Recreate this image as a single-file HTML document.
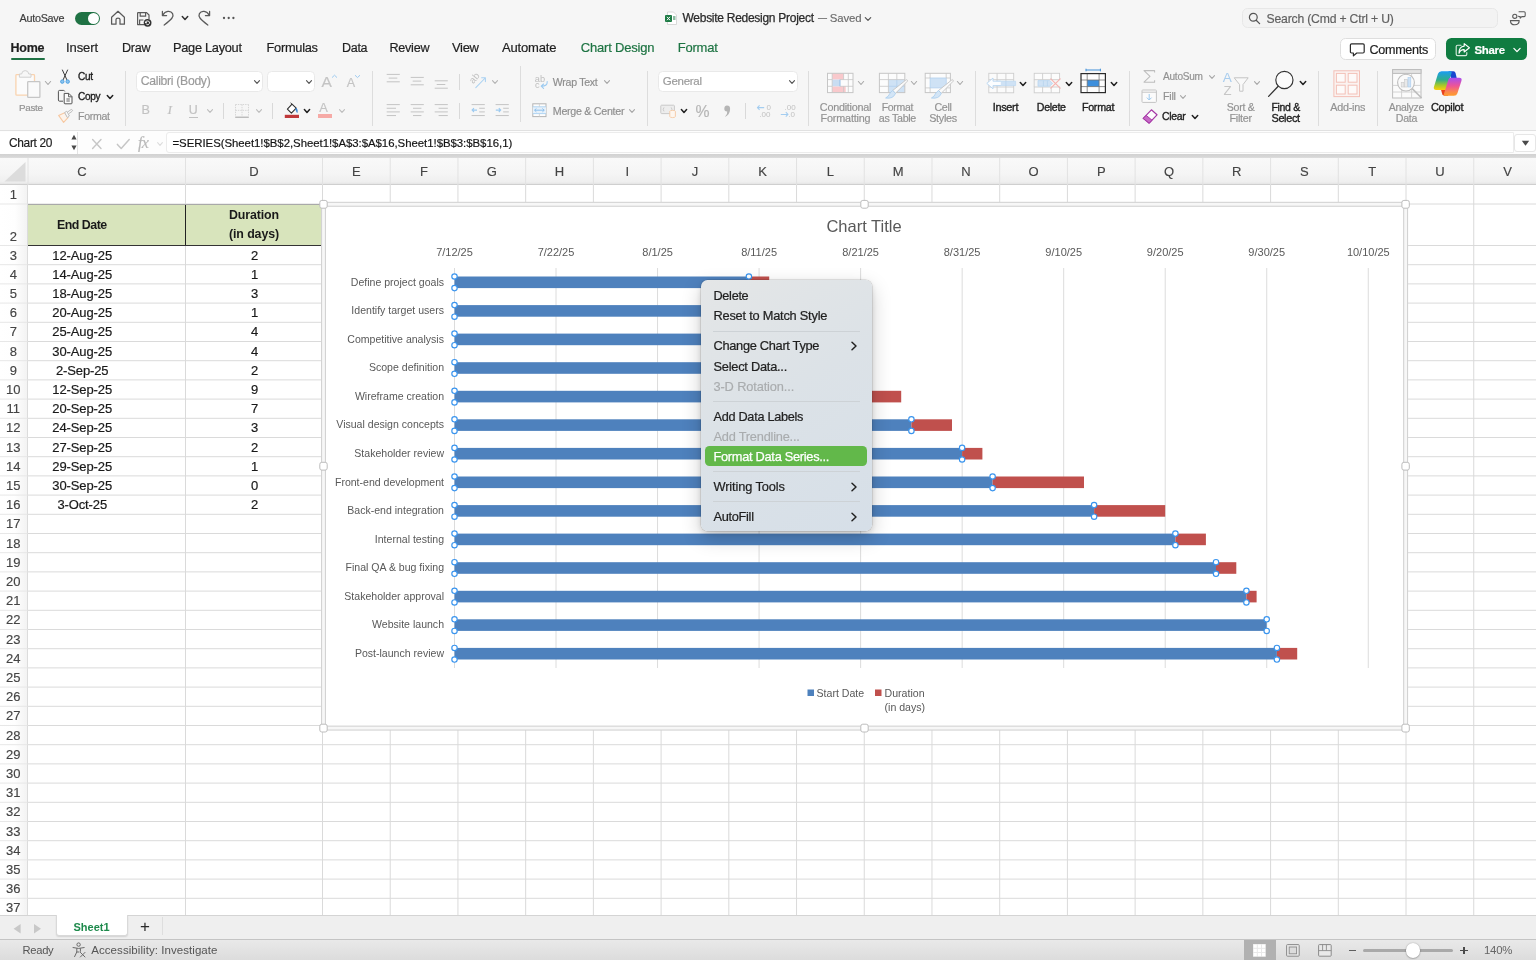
<!DOCTYPE html>
<html lang="en"><head><meta charset="utf-8"><title>Website Redesign Project</title>
<style>
*{box-sizing:border-box}
html,body{margin:0;padding:0}
body{width:1536px;height:960px;overflow:hidden;position:relative;background:#f6f6f6;font-family:"Liberation Sans",sans-serif;color:#262626;-webkit-font-smoothing:antialiased}
.abs{position:absolute}
#toolbar .abs{-webkit-text-stroke-width:0.18px}
/* ---------- sheet ---------- */
#toolbar,#sheet,#menu,#tabs,#status{will-change:transform}
#sheet{position:absolute;left:0;top:0;width:1536px;height:915px;overflow:hidden}
#sheet:before{content:"";position:absolute;left:0;top:158px;width:1536px;height:757px;background:#fff}
#grid{position:absolute;left:0;top:158px}
#colhead{position:absolute;left:0;top:158px;width:1536px;height:27px;background:linear-gradient(#f9f9f9 0%,#f5f5f5 60%,#efefef 92%,#e4e4e4 100%);border-bottom:1px solid #cfcfcf}
#chsep{position:absolute;left:0;top:158px}
#corner{position:absolute;left:0;top:158px;width:28px;height:27px}
.ch{position:absolute;top:158px;height:26px;line-height:27px;text-align:center;font-size:13px;color:#444;-webkit-text-stroke:0.15px #444}
#rowhead{position:absolute;left:0;top:185px;width:28px;height:730px;background:linear-gradient(to right,#ffffff 0%,#fefefe 55%,#f3f3f3 100%);border-right:1px solid #dcdcdc}
.rh{position:absolute;left:0;width:28px;text-align:center;font-size:13px;color:#444;padding-right:1.5px;-webkit-text-stroke:0.15px #444}
.hc{position:absolute;background:#d8e4bc;text-align:center;font-weight:bold;font-size:12.4px;color:#1a1a1a;letter-spacing:-0.1px}
.cell{position:absolute;height:19.2px;line-height:20.4px;text-align:center;font-size:13px;color:#1a1a1a;letter-spacing:-0.12px;-webkit-text-stroke:0.2px #1a1a1a}
#chart{position:absolute;left:315px;top:197px}
/* ---------- context menu ---------- */
#menu{position:absolute;left:701px;top:280px;width:171px;height:251px;border-radius:6.5px;background:linear-gradient(150deg,#e4e6e7 0%,#dce2e7 45%,#d6dfe8 100%);box-shadow:0 0 0 0.5px rgba(0,0,0,.18),0 7px 20px rgba(0,0,0,.2),0 2px 6px rgba(0,0,0,.12);font-size:13px;color:#1f1f1f}
#menu .mi{position:absolute;left:12.5px;height:20px;line-height:20px;white-space:nowrap;-webkit-text-stroke:0.22px #1f1f1f}
#menu .dis{color:#a9acae;-webkit-text-stroke:0.15px #a9acae}
#menu .sep{position:absolute;left:12px;width:147px;height:1px;background:#cdd2d6}
#menu .hl{position:absolute;left:4.2px;top:166.2px;width:161.6px;height:19.6px;border-radius:4.5px;background:#62b84a}
#menu .chev{position:absolute;left:149px;width:8px;height:10px}
/* ---------- bottom ---------- */
#tabs{position:absolute;left:0;top:915px;width:1536px;height:24px;background:#efefef;border-top:1px solid #d4d4d4}
#status{position:absolute;left:0;top:939px;width:1536px;height:21px;background:linear-gradient(#e9e9e9,#dcdcdc);border-top:1px solid #c4c4c4;font-size:11.5px;color:#505050}

</style></head>
<body>
<div id="toolbar">
<div class="abs" style="top:9.90px;height:16px;line-height:16px;font-size:10.8px;color:#3d3d3d;white-space:nowrap;letter-spacing:-0.262px;left:19.50px;">AutoSave</div>
<div class="abs" style="left:74.5px;top:12px;width:25.5px;height:12.8px;border-radius:7px;background:#1f7244"></div>
<div class="abs" style="left:88.2px;top:13.2px;width:10.4px;height:10.4px;border-radius:6px;background:#fff"></div>
<svg class="abs" style="left:110.00px;top:10.00px" width="16" height="16" viewBox="0 0 16 16"><path d="M1.6 7.2 L8 1.3 L14.4 7.2 V14.2 H10 V9.6 Q10 8 8 8 Q6 8 6 9.6 V14.2 H1.6 Z" fill="none" stroke="#5a5a5a" stroke-width="1.25" stroke-linejoin="round"/></svg>
<svg class="abs" style="left:135.50px;top:10.50px" width="17" height="17" viewBox="0 0 17 17"><path d="M1.6 1.6 H10.6 L13 4 V8 M8 13.6 H1.6 Z M1.6 13.6 V1.6" fill="none" stroke="#5a5a5a" stroke-width="1.2" stroke-linejoin="round"/><path d="M4.2 1.8 V5.2 H9.6 V1.8" fill="none" stroke="#5a5a5a" stroke-width="1.2"/><path d="M3.6 13.4 V9 H7.4" fill="none" stroke="#5a5a5a" stroke-width="1.2"/><circle cx="11.6" cy="11.8" r="3.9" fill="#333"/><path d="M9.7 11.9 a1.9 1.9 0 1 1 .7 1.4 M9.4 10.6 l.3 1.4 l1.3 -.4" fill="none" stroke="#fff" stroke-width=".9"/></svg>
<svg class="abs" style="left:160.00px;top:9.00px" width="16" height="18" viewBox="0 0 16 18"><path d="M2.4 2.4 V6.6 H6.6 M2.8 6.2 C5.2 1.8 10.6 1.2 12.6 4.6 C14.2 7.6 11.8 10.2 4.2 16" fill="none" stroke="#5a5a5a" stroke-width="1.25" stroke-linecap="round" stroke-linejoin="round"/></svg>
<svg class="abs" style="left:178.60px;top:12.20px" width="12" height="12" viewBox="-6 -6 12 12"><path d="M-2.7 -1.5 L0 1.5 L2.7 -1.5" fill="none" stroke="#333" stroke-width="1.5" stroke-linecap="round" stroke-linejoin="round"/></svg>
<svg class="abs" style="left:195.50px;top:9.00px" width="16" height="18" viewBox="0 0 16 18"><path d="M13.6 2.4 V6.6 H9.4 M13.2 6.2 C10.8 1.8 5.4 1.2 3.4 4.6 C1.8 7.6 4.2 10.2 11.8 16" fill="none" stroke="#5a5a5a" stroke-width="1.25" stroke-linecap="round" stroke-linejoin="round"/></svg>
<svg class="abs" style="left:221.00px;top:15.00px" width="16" height="6" viewBox="0 0 16 6"><circle cx="3" cy="3" r="1.15" fill="#555"/><circle cx="7.7" cy="3" r="1.15" fill="#555"/><circle cx="12.4" cy="3" r="1.15" fill="#555"/></svg>
<svg class="abs" style="left:663.50px;top:11.00px" width="14" height="15" viewBox="0 0 14 15"><path d="M3.5 1 H9.5 L12.5 4 V13.5 H3.5 Z" fill="#fff" stroke="#d0d0d0" stroke-width=".8"/><rect x="1" y="4" width="7" height="7" rx="1" fill="#1d7b45"/><path d="M3 5.8 L6 9.2 M6 5.8 L3 9.2" stroke="#fff" stroke-width="1"/><path d="M9 6 h2.5 M9 8 h2.5" stroke="#1d7b45" stroke-width="1"/></svg>
<div class="abs" style="top:10.30px;height:16px;line-height:16px;font-size:12px;color:#2a2a2a;white-space:nowrap;letter-spacing:-0.276px;left:682.50px;-webkit-text-stroke:0.25px #2a2a2a;">Website Redesign Project</div>
<div class="abs" style="top:10.30px;height:16px;line-height:16px;font-size:11.4px;color:#6a6a6a;white-space:nowrap;letter-spacing:-0.1px;left:818.00px;-webkit-text-stroke:0.15px #6a6a6a;"><span style="display:inline-block;width:11.8px;font-size:9px;vertical-align:top">—</span>Saved</div>
<svg class="abs" style="left:861.50px;top:12.50px" width="12" height="12" viewBox="-6 -6 12 12"><path d="M-2.7 -1.4 L0 1.4 L2.7 -1.4" fill="none" stroke="#555" stroke-width="1.2" stroke-linecap="round" stroke-linejoin="round"/></svg>
<div class="abs" style="left:1242px;top:8.3px;width:255.6px;height:20.2px;border-radius:5.5px;background:#f3f3f3;border:1px solid #e7e7e7"></div>
<svg class="abs" style="left:1247.50px;top:12.00px" width="13" height="13" viewBox="0 0 13 13"><circle cx="5.3" cy="5.3" r="3.9" fill="none" stroke="#555" stroke-width="1.2"/><path d="M8.2 8.2 L11.6 11.6" stroke="#555" stroke-width="1.3" stroke-linecap="round"/></svg>
<div class="abs" style="top:10.80px;height:16px;line-height:16px;font-size:12.2px;color:#616161;white-space:nowrap;letter-spacing:-0.183px;left:1266.50px;">Search (Cmd + Ctrl + U)</div>
<svg class="abs" style="left:1509.00px;top:9.50px" width="18" height="17" viewBox="0 0 18 17"><circle cx="5.8" cy="6.3" r="2.1" fill="none" stroke="#5a5a5a" stroke-width="1.1"/><path d="M1.4 10.6 H10.2 Q10.2 14.8 5.8 14.8 Q1.4 14.8 1.4 10.6 Z" fill="none" stroke="#5a5a5a" stroke-width="1.1" stroke-linejoin="round"/><path d="M9.6 1.8 H15.2 Q16.2 1.8 16.2 2.8 V5.6 Q16.2 6.6 15.2 6.6 H12.8 L11.2 8.2 V6.6 H10.6 Q9.6 6.6 9.4 5.8" fill="none" stroke="#5a5a5a" stroke-width="1.05" stroke-linejoin="round"/></svg>
<div class="abs" style="top:40.40px;height:16px;line-height:16px;font-size:12.5px;color:#1f1f1f;white-space:nowrap;font-weight:bold;letter-spacing:-0.243px;left:10.50px;">Home</div>
<div class="abs" style="top:40.40px;height:16px;line-height:16px;font-size:13px;color:#1f1f1f;white-space:nowrap;letter-spacing:-0.103px;left:66.00px;-webkit-text-stroke:0.2px #1f1f1f;">Insert</div>
<div class="abs" style="top:40.40px;height:16px;line-height:16px;font-size:12.6px;color:#1f1f1f;white-space:nowrap;letter-spacing:-0.301px;left:122.00px;-webkit-text-stroke:0.2px #1f1f1f;">Draw</div>
<div class="abs" style="top:40.40px;height:16px;line-height:16px;font-size:12.8px;color:#1f1f1f;white-space:nowrap;letter-spacing:-0.288px;left:173.00px;-webkit-text-stroke:0.2px #1f1f1f;">Page Layout</div>
<div class="abs" style="top:40.40px;height:16px;line-height:16px;font-size:12.8px;color:#1f1f1f;white-space:nowrap;letter-spacing:-0.264px;left:266.50px;-webkit-text-stroke:0.2px #1f1f1f;">Formulas</div>
<div class="abs" style="top:40.40px;height:16px;line-height:16px;font-size:12.5px;color:#1f1f1f;white-space:nowrap;letter-spacing:-0.301px;left:342.00px;-webkit-text-stroke:0.2px #1f1f1f;">Data</div>
<div class="abs" style="top:40.40px;height:16px;line-height:16px;font-size:12.6px;color:#1f1f1f;white-space:nowrap;letter-spacing:-0.263px;left:389.50px;-webkit-text-stroke:0.2px #1f1f1f;">Review</div>
<div class="abs" style="top:40.40px;height:16px;line-height:16px;font-size:13px;color:#1f1f1f;white-space:nowrap;letter-spacing:-0.315px;left:452.00px;-webkit-text-stroke:0.2px #1f1f1f;">View</div>
<div class="abs" style="top:40.40px;height:16px;line-height:16px;font-size:13px;color:#1f1f1f;white-space:nowrap;letter-spacing:-0.164px;left:502.00px;-webkit-text-stroke:0.2px #1f1f1f;">Automate</div>
<div class="abs" style="top:40.40px;height:16px;line-height:16px;font-size:13px;color:#1e7443;white-space:nowrap;letter-spacing:-0.193px;left:580.75px;-webkit-text-stroke:0.2px #1e7443;">Chart Design</div>
<div class="abs" style="top:40.40px;height:16px;line-height:16px;font-size:13px;color:#1e7443;white-space:nowrap;letter-spacing:-0.234px;left:677.75px;-webkit-text-stroke:0.2px #1e7443;">Format</div>
<div class="abs" style="left:10.5px;top:58.2px;width:34px;height:2px;border-radius:1px;background:#1f7244"></div>
<div class="abs" style="left:1340.3px;top:38.2px;width:95.6px;height:22px;border-radius:5.5px;background:#fff;border:1px solid #dedede"></div>
<svg class="abs" style="left:1348.50px;top:42.00px" width="17" height="16" viewBox="0 0 17 16"><path d="M2.6 1.8 H14 Q15.2 1.8 15.2 3 V9.8 Q15.2 11 14 11 H7.8 L4.4 13.8 V11 H2.6 Q1.4 11 1.4 9.8 V3 Q1.4 1.8 2.6 1.8 Z" fill="none" stroke="#2b2b2b" stroke-width="1.2" stroke-linejoin="round"/></svg>
<div class="abs" style="top:41.60px;height:16px;line-height:16px;font-size:12.6px;color:#1f1f1f;white-space:nowrap;letter-spacing:-0.309px;left:1369.50px;-webkit-text-stroke:0.2px #1f1f1f;">Comments</div>
<div class="abs" style="left:1445.8px;top:38.4px;width:80.8px;height:22px;border-radius:5.5px;background:#107c41"></div>
<svg class="abs" style="left:1454.00px;top:41.50px" width="17" height="16" viewBox="0 0 17 16"><path d="M7 3.2 H3.6 Q2.2 3.2 2.2 4.6 V12.2 Q2.2 13.6 3.6 13.6 H11.4 Q12.8 13.6 12.8 12.2 V10.6" fill="none" stroke="#d6eadd" stroke-width="1.15" stroke-linecap="round"/><path d="M10.2 1.6 L15.4 5.8 L10.2 10 V7.6 Q6.6 7.4 5 11.2 Q5 4.6 10.2 4.1 Z" fill="none" stroke="#fff" stroke-width="1.15" stroke-linejoin="round"/></svg>
<div class="abs" style="top:41.60px;height:16px;line-height:16px;font-size:11.4px;color:#fff;white-space:nowrap;font-weight:bold;letter-spacing:-0.296px;left:1474.50px;">Share</div>
<svg class="abs" style="left:1511.00px;top:43.80px" width="12" height="12" viewBox="-6 -6 12 12"><path d="M-3.1 -1.6 L0 1.6 L3.1 -1.6" fill="none" stroke="#fff" stroke-width="1.3" stroke-linecap="round" stroke-linejoin="round"/></svg>
<svg class="abs" style="left:14.00px;top:69.00px" width="28" height="31" viewBox="0 0 28 31"><rect x="1.9" y="5.6" width="18.6" height="20.6" rx="0.8" fill="#fbfbfb" stroke="#f9d3b0" stroke-width="1.3"/><path d="M5.4 8.2 V5 H7.6 Q8 1.6 11.2 1.6 Q14.4 1.6 14.8 5 H17 V8.2 Z" fill="#f7f7f7" stroke="#d0d0d0" stroke-width="1"/><rect x="13.7" y="12.6" width="12.2" height="15.8" rx="0.6" fill="#fafafa" stroke="#c6c6c6" stroke-width="1.3"/></svg>
<svg class="abs" style="left:41.50px;top:77.20px" width="12" height="12" viewBox="-6 -6 12 12"><path d="M-2.6 -1.5 L0 1.5 L2.6 -1.5" fill="none" stroke="#a8a8a8" stroke-width="1.1" stroke-linecap="round" stroke-linejoin="round"/></svg>
<div class="abs" style="top:100.00px;height:16px;line-height:16px;font-size:9.8px;color:#929292;white-space:nowrap;letter-spacing:-0.265px;left:-69.13px;width:200px;text-align:center;">Paste</div>
<svg class="abs" style="left:58.50px;top:68.60px" width="12" height="16" viewBox="0 0 12 16"><path d="M3.4 1 L7.8 10.6 M8.6 1 L4.2 10.6" stroke="#3a3a3a" stroke-width="1" stroke-linecap="round"/><circle cx="3.3" cy="12.6" r="1.7" fill="#8cc4f0" stroke="#4a9fe0" stroke-width="1"/><circle cx="8.7" cy="12.6" r="1.7" fill="#8cc4f0" stroke="#4a9fe0" stroke-width="1"/></svg>
<div class="abs" style="top:69.30px;height:16px;line-height:16px;font-size:10.0px;color:#1e1e1e;white-space:nowrap;letter-spacing:-0.281px;left:78.00px;-webkit-text-stroke:0.35px #1e1e1e;">Cut</div>
<svg class="abs" style="left:56.50px;top:88.50px" width="17" height="16" viewBox="0 0 17 16"><path d="M6 12.2 H2.6 Q1.4 12.2 1.4 11 V2.6 Q1.4 1.4 2.6 1.4 H6.4 Q7.4 1.4 7.8 2.4" fill="none" stroke="#4a4a4a" stroke-width=".95"/><path d="M7.2 4.4 H11.8 L15 7.6 V14 Q15 14.8 14.2 14.8 H8 Q7.2 14.8 7.2 14 Z" fill="#fbfbfb" stroke="#4a4a4a" stroke-width=".95" stroke-linejoin="round"/><path d="M11.6 4.6 V7.8 H14.8" fill="none" stroke="#4a4a4a" stroke-width=".9"/><path d="M9.4 10 H12.8 M9.4 12 H12.8" stroke="#3a3a3a" stroke-width=".8"/></svg>
<div class="abs" style="top:89.30px;height:16px;line-height:16px;font-size:10.0px;color:#1e1e1e;white-space:nowrap;letter-spacing:-0.282px;left:78.00px;-webkit-text-stroke:0.35px #1e1e1e;">Copy</div>
<svg class="abs" style="left:103.60px;top:91.00px" width="12" height="12" viewBox="-6 -6 12 12"><path d="M-2.7 -1.5 L0 1.5 L2.7 -1.5" fill="none" stroke="#222" stroke-width="1.5" stroke-linecap="round" stroke-linejoin="round"/></svg>
<svg class="abs" style="left:57.00px;top:108.00px" width="18" height="16" viewBox="0 0 18 16"><path d="M1.6 7.4 L8.2 4.4 L11 9.6 L6.6 14.4 Z" fill="#fdf3ea" stroke="#f7c9a3" stroke-width="1.1" stroke-linejoin="round"/><path d="M7.6 4.6 L9.8 3.2 L12.4 8 L10.4 9.6 Z M10.6 4 L14 1.6 Q15 1.2 15.4 2 Q15.8 2.8 15 3.4 L11.8 5.6" fill="#f8f8f8" stroke="#bdbdbd" stroke-width="1" stroke-linejoin="round"/></svg>
<div class="abs" style="top:108.20px;height:16px;line-height:16px;font-size:10.6px;color:#929292;white-space:nowrap;letter-spacing:-0.314px;left:78.00px;">Format</div>
<div class="abs" style="left:125.30px;top:71px;width:1px;height:55px;background:#dddddd"></div>
<div class="abs" style="left:135.6px;top:70.6px;width:127.8px;height:21.2px;border-radius:4.5px;background:#fff;border:1px solid #e9e9e9"></div>
<div class="abs" style="top:73.40px;height:16px;line-height:16px;font-size:12.2px;color:#9b9b9b;white-space:nowrap;letter-spacing:-0.3px;left:140.80px;">Calibri (Body)</div>
<svg class="abs" style="left:251.00px;top:76.00px" width="12" height="12" viewBox="-6 -6 12 12"><path d="M-2.5 -1.4 L0 1.4 L2.5 -1.4" fill="none" stroke="#555" stroke-width="1.15" stroke-linecap="round" stroke-linejoin="round"/></svg>
<div class="abs" style="left:266.6px;top:70.6px;width:48.6px;height:21.2px;border-radius:4.5px;background:#fff;border:1px solid #e9e9e9"></div>
<svg class="abs" style="left:302.60px;top:76.00px" width="12" height="12" viewBox="-6 -6 12 12"><path d="M-2.5 -1.4 L0 1.4 L2.5 -1.4" fill="none" stroke="#555" stroke-width="1.15" stroke-linecap="round" stroke-linejoin="round"/></svg>
<div class="abs" style="top:73.60px;height:16px;line-height:16px;font-size:15.5px;color:#c4c4c4;white-space:nowrap;left:321.50px;">A</div>
<svg class="abs" style="left:330.50px;top:73.50px" width="7" height="5" viewBox="0 0 7 5"><path d="M1 3.6 L3.5 1.2 L6 3.6" fill="none" stroke="#9ccaf0" stroke-width="1"/></svg>
<div class="abs" style="top:74.60px;height:16px;line-height:16px;font-size:12.6px;color:#c4c4c4;white-space:nowrap;left:346.80px;">A</div>
<svg class="abs" style="left:354.00px;top:73.50px" width="7" height="5" viewBox="0 0 7 5"><path d="M1 1.2 L3.5 3.6 L6 1.2" fill="none" stroke="#9ccaf0" stroke-width="1"/></svg>
<div class="abs" style="top:102.20px;height:16px;line-height:16px;font-size:12.6px;color:#c2c2c2;white-space:nowrap;left:141.60px;">B</div>
<div class="abs" style="top:102.20px;height:16px;line-height:16px;font-size:12.6px;color:#c2c2c2;white-space:nowrap;left:167.40px;font-style:italic;font-family:'Liberation Serif',serif;font-size:13.5px;">I</div>
<div class="abs" style="top:101.80px;height:16px;line-height:16px;font-size:12.4px;color:#c2c2c2;white-space:nowrap;left:188.80px;">U</div>
<div class="abs" style="left:189px;top:116.6px;width:9px;height:1px;background:#c2c2c2"></div>
<svg class="abs" style="left:204.20px;top:104.80px" width="12" height="12" viewBox="-6 -6 12 12"><path d="M-2.5 -1.4 L0 1.4 L2.5 -1.4" fill="none" stroke="#bdbdbd" stroke-width="1.1" stroke-linecap="round" stroke-linejoin="round"/></svg>
<div class="abs" style="left:222.80px;top:103px;width:1px;height:16px;background:#d9d9d9"></div>
<svg class="abs" style="left:234.00px;top:102.50px" width="16" height="16" viewBox="0 0 16 16"><path d="M1.5 1.5 H14.5 M1.5 1.5 V13 M14.5 1.5 V13 M8 1.5 V13 M1.5 7.4 H14.5" fill="none" stroke="#d2d2d2" stroke-width=".9" stroke-dasharray="1.4 1"/><path d="M1.2 14.2 H14.8" stroke="#a9a9a9" stroke-width="1.1"/></svg>
<svg class="abs" style="left:252.60px;top:104.80px" width="12" height="12" viewBox="-6 -6 12 12"><path d="M-2.5 -1.4 L0 1.4 L2.5 -1.4" fill="none" stroke="#bdbdbd" stroke-width="1.1" stroke-linecap="round" stroke-linejoin="round"/></svg>
<div class="abs" style="left:271.80px;top:103px;width:1px;height:16px;background:#d9d9d9"></div>
<svg class="abs" style="left:283.50px;top:101.50px" width="16" height="17" viewBox="0 0 16 17"><path d="M3.4 7.2 L8 2.2 L12.2 6.2 L7.4 11.2 Z" fill="#fff" stroke="#2f2f2f" stroke-width="1.1" stroke-linejoin="round"/><path d="M8 2.2 L6.6 0.9" stroke="#2f2f2f" stroke-width="1"/><path d="M12.2 6 Q14 8.2 13.2 10.6 Q12.2 9 11.6 6.8" fill="#2f7fd1" stroke="#2f7fd1" stroke-width=".6"/><rect x="0.8" y="12.8" width="14.2" height="3.2" fill="#c0393b"/></svg>
<svg class="abs" style="left:301.20px;top:104.80px" width="12" height="12" viewBox="-6 -6 12 12"><path d="M-2.6 -1.5 L0 1.5 L2.6 -1.5" fill="none" stroke="#222" stroke-width="1.5" stroke-linecap="round" stroke-linejoin="round"/></svg>
<div class="abs" style="top:99.80px;height:16px;line-height:16px;font-size:12.8px;color:#c4c4c4;white-space:nowrap;left:319.20px;">A</div>
<div class="abs" style="left:318px;top:114.4px;width:14.4px;height:3.2px;background:#f6aaa6"></div>
<svg class="abs" style="left:336.20px;top:104.80px" width="12" height="12" viewBox="-6 -6 12 12"><path d="M-2.5 -1.4 L0 1.4 L2.5 -1.4" fill="none" stroke="#bdbdbd" stroke-width="1.1" stroke-linecap="round" stroke-linejoin="round"/></svg>
<div class="abs" style="left:372.10px;top:71px;width:1px;height:55px;background:#dddddd"></div>
<svg class="abs" style="left:386.00px;top:70.00px" width="14.5" height="20" viewBox="0 0 14.5 20"><path d="M0.7 4.400000000000006 H13.8" stroke="#c4c4c4" stroke-width="1"/><path d="M2.7 8.100000000000005 H11.3" stroke="#c4c4c4" stroke-width="1"/><path d="M0.7 11.800000000000006 H13.8" stroke="#c4c4c4" stroke-width="1"/></svg>
<svg class="abs" style="left:409.70px;top:70.00px" width="14.5" height="20" viewBox="0 0 14.5 20"><path d="M0.7 7.400000000000006 H13.8" stroke="#c4c4c4" stroke-width="1"/><path d="M2.7 11.100000000000005 H11.3" stroke="#c4c4c4" stroke-width="1"/><path d="M0.7 14.800000000000006 H13.8" stroke="#c4c4c4" stroke-width="1"/></svg>
<svg class="abs" style="left:433.50px;top:70.00px" width="14.5" height="20" viewBox="0 0 14.5 20"><path d="M0.7 10.799999999999997 H13.8" stroke="#c4c4c4" stroke-width="1"/><path d="M2.7 14.499999999999996 H11.3" stroke="#c4c4c4" stroke-width="1"/><path d="M0.7 18.199999999999996 H13.8" stroke="#c4c4c4" stroke-width="1"/></svg>
<div class="abs" style="left:459.10px;top:73.5px;width:1px;height:16.0px;background:#d9d9d9"></div>
<svg class="abs" style="left:468.00px;top:70.00px" width="21" height="21" viewBox="0 0 21 21"><text x="0" y="0" font-size="9.6" fill="#c0c0c0" transform="translate(5.2 14.2) rotate(-50)" font-family="Liberation Sans, sans-serif">ab</text><path d="M7.8 17.6 L17.2 8 M13.6 7.8 H17.4 V11.6" fill="none" stroke="#a9d1f2" stroke-width="1.05" stroke-linecap="round" stroke-linejoin="round"/></svg>
<svg class="abs" style="left:488.60px;top:75.60px" width="12" height="12" viewBox="-6 -6 12 12"><path d="M-2.5 -1.4 L0 1.4 L2.5 -1.4" fill="none" stroke="#b4b4b4" stroke-width="1.1" stroke-linecap="round" stroke-linejoin="round"/></svg>
<svg class="abs" style="left:386.00px;top:100.00px" width="14.5" height="20" viewBox="0 0 14.5 20"><path d="M0.7 4.6 H13.8" stroke="#c4c4c4" stroke-width="1"/><path d="M0.7 8.25 H10" stroke="#c4c4c4" stroke-width="1"/><path d="M0.7 11.899999999999999 H13.8" stroke="#c4c4c4" stroke-width="1"/><path d="M0.7 15.549999999999999 H10" stroke="#c4c4c4" stroke-width="1"/></svg>
<svg class="abs" style="left:409.70px;top:100.00px" width="14.5" height="20" viewBox="0 0 14.5 20"><path d="M0.7 4.6 H13.8" stroke="#c4c4c4" stroke-width="1"/><path d="M3 8.25 H11.4" stroke="#c4c4c4" stroke-width="1"/><path d="M0.7 11.899999999999999 H13.8" stroke="#c4c4c4" stroke-width="1"/><path d="M3 15.549999999999999 H11.4" stroke="#c4c4c4" stroke-width="1"/></svg>
<svg class="abs" style="left:433.50px;top:100.00px" width="14.5" height="20" viewBox="0 0 14.5 20"><path d="M0.7 4.6 H13.8" stroke="#c4c4c4" stroke-width="1"/><path d="M4.6 8.25 H13.8" stroke="#c4c4c4" stroke-width="1"/><path d="M0.7 11.899999999999999 H13.8" stroke="#c4c4c4" stroke-width="1"/><path d="M4.6 15.549999999999999 H13.8" stroke="#c4c4c4" stroke-width="1"/></svg>
<div class="abs" style="left:459.10px;top:103px;width:1px;height:16px;background:#d9d9d9"></div>
<svg class="abs" style="left:471.00px;top:100.00px" width="14" height="18" viewBox="0 0 14 18"><path d="M0.6 4.6 H13.8 M8.2 8.25 H13.8 M8.2 11.9 H13.8 M0.6 15.55 H13.8" stroke="#c4c4c4" stroke-width="1"/><path d="M6 10.1 H1.2 M3 8.2 L1.1 10.1 L3 12" fill="none" stroke="#9ccaf0" stroke-width="1.1"/></svg>
<svg class="abs" style="left:494.80px;top:100.00px" width="14" height="18" viewBox="0 0 14 18"><path d="M0.6 4.6 H13.8 M8.2 8.25 H13.8 M8.2 11.9 H13.8 M0.6 15.55 H13.8" stroke="#c4c4c4" stroke-width="1"/><path d="M0.8 10.1 H5.6 M3.8 8.2 L5.7 10.1 L3.8 12" fill="none" stroke="#9ccaf0" stroke-width="1.1"/></svg>
<div class="abs" style="left:520.30px;top:66px;width:1px;height:56px;background:#dddddd"></div>
<svg class="abs" style="left:532.50px;top:73.50px" width="17" height="16" viewBox="0 0 17 16"><text x="1.8" y="8" font-size="9.2" fill="#bdbdbd" font-family="Liberation Sans, sans-serif">ab</text><text x="2" y="14.3" font-size="9.2" fill="#bdbdbd" font-family="Liberation Sans, sans-serif">c</text><path d="M14.2 7.6 Q14.6 12 8.6 12.2 M10.6 10 L8.2 12.2 L10.6 14.4" fill="none" stroke="#9ccaf0" stroke-width="1.1" stroke-linecap="round" stroke-linejoin="round"/></svg>
<div class="abs" style="top:73.80px;height:16px;line-height:16px;font-size:10.6px;color:#8e8e8e;white-space:nowrap;letter-spacing:-0.291px;left:552.80px;">Wrap Text</div>
<svg class="abs" style="left:600.60px;top:76.00px" width="12" height="12" viewBox="-6 -6 12 12"><path d="M-2.5 -1.4 L0 1.4 L2.5 -1.4" fill="none" stroke="#a6a6a6" stroke-width="1.1" stroke-linecap="round" stroke-linejoin="round"/></svg>
<svg class="abs" style="left:531.50px;top:102.80px" width="16" height="15" viewBox="0 0 16 15"><rect x="0.8" y="0.8" width="13.2" height="12.8" fill="#fdfdfd" stroke="#b4b4b4" stroke-width="1"/><rect x="0.8" y="3.8" width="13.2" height="6.8" fill="#e7f1fa"/><path d="M0.8 3.8 H14 M0.8 10.6 H14" stroke="#a9d1f2" stroke-width=".9"/><path d="M7.4 0.8 V3.8 M7.4 10.6 V13.6" stroke="#cfcfcf" stroke-width=".8"/><path d="M2.6 7.2 H12.2 M4.4 5.5 L2.6 7.2 L4.4 8.9 M10.4 5.5 L12.2 7.2 L10.4 8.9" fill="none" stroke="#8bbfec" stroke-width="1" stroke-linejoin="round"/></svg>
<div class="abs" style="top:102.80px;height:16px;line-height:16px;font-size:10.7px;color:#8e8e8e;white-space:nowrap;letter-spacing:-0.291px;left:552.80px;">Merge &amp; Center</div>
<svg class="abs" style="left:626.00px;top:105.00px" width="12" height="12" viewBox="-6 -6 12 12"><path d="M-2.5 -1.4 L0 1.4 L2.5 -1.4" fill="none" stroke="#a6a6a6" stroke-width="1.1" stroke-linecap="round" stroke-linejoin="round"/></svg>
<div class="abs" style="left:646.80px;top:71px;width:1px;height:55px;background:#dddddd"></div>
<div class="abs" style="left:657.6px;top:70.6px;width:140.6px;height:21.2px;border-radius:4.5px;background:#fff;border:1px solid #e9e9e9"></div>
<div class="abs" style="top:73.40px;height:16px;line-height:16px;font-size:11.5px;color:#9b9b9b;white-space:nowrap;letter-spacing:-0.277px;left:662.80px;">General</div>
<svg class="abs" style="left:785.80px;top:76.00px" width="12" height="12" viewBox="-6 -6 12 12"><path d="M-2.5 -1.4 L0 1.4 L2.5 -1.4" fill="none" stroke="#555" stroke-width="1.15" stroke-linecap="round" stroke-linejoin="round"/></svg>
<svg class="abs" style="left:659.50px;top:103.50px" width="17" height="15" viewBox="0 0 17 15"><rect x="0.8" y="1.2" width="13.6" height="8.4" rx="0.8" fill="#ededed" stroke="#c9c9c9" stroke-width="1"/><path d="M4 3.4 Q2.4 5.4 4 7.4 M11.2 3.4 Q12.8 5.4 11.2 7.4" fill="none" stroke="#c2c2c2" stroke-width=".8"/><ellipse cx="12.6" cy="7.6" rx="2.8" ry="1.2" fill="#fdf6ef" stroke="#f5c9a4" stroke-width=".9"/><path d="M9.8 7.6 V12.4 Q9.8 13.6 12.6 13.6 Q15.4 13.6 15.4 12.4 V7.6" fill="#fdf6ef" stroke="#f5c9a4" stroke-width=".9"/></svg>
<svg class="abs" style="left:678.20px;top:105.00px" width="12" height="12" viewBox="-6 -6 12 12"><path d="M-2.6 -1.5 L0 1.5 L2.6 -1.5" fill="none" stroke="#222" stroke-width="1.5" stroke-linecap="round" stroke-linejoin="round"/></svg>
<div class="abs" style="top:103.80px;height:16px;line-height:16px;font-size:15.8px;color:#b6b6b6;white-space:nowrap;left:695.60px;">%</div>
<svg class="abs" style="left:721.50px;top:103.50px" width="10.4" height="15.6" viewBox="0 0 8 12"><path d="M3.8 1.2 Q6.6 1.2 6.2 4.6 Q5.8 8.4 2.2 10 Q4.4 7.8 4 5.8 Q1.6 5.6 1.8 3.4 Q2 1.2 3.8 1.2 Z" fill="#b5b5b5"/></svg>
<div class="abs" style="left:744.80px;top:103px;width:1px;height:16px;background:#d9d9d9"></div>
<svg class="abs" style="left:755.50px;top:102.50px" width="17" height="16" viewBox="0 0 17 16"><path d="M1.4 4.6 H8.2 M3.6 2.4 L1.4 4.6 L3.6 6.8" fill="none" stroke="#a4cdf0" stroke-width="1.05" stroke-linejoin="round"/><text x="10.6" y="6.8" font-size="8" fill="#c2c2c2" font-family="Liberation Sans, sans-serif">0</text><text x="3.4" y="14.4" font-size="8" fill="#c2c2c2" font-family="Liberation Sans, sans-serif">.00</text></svg>
<svg class="abs" style="left:779.50px;top:102.50px" width="17" height="16" viewBox="0 0 17 16"><text x="4.6" y="6.8" font-size="8" fill="#c2c2c2" font-family="Liberation Sans, sans-serif">.00</text><path d="M0.8 11.4 H8 M5.8 9.2 L8 11.4 L5.8 13.6" fill="none" stroke="#a4cdf0" stroke-width="1.05" stroke-linejoin="round"/><text x="8.4" y="14.4" font-size="8" fill="#c2c2c2" font-family="Liberation Sans, sans-serif">.0</text></svg>
<div class="abs" style="left:808.30px;top:71px;width:1px;height:55px;background:#dddddd"></div>
<svg class="abs" style="left:825.50px;top:72.00px" width="29" height="23" viewBox="0 0 29 23"><rect x="1.5" y="1.3" width="25.5" height="19.3" fill="#fcfcfc"/><rect x="6.2" y="1.3" width="11.4" height="6.3" fill="#f9c9cc"/><rect x="6.2" y="14.3" width="13.5" height="6.3" fill="#f9c9cc"/><rect x="6.2" y="7.6" width="7.8" height="6.7" fill="#c9ddf2"/><path d="M14 7.6 V14.3" stroke="#8db9e4" stroke-width=".9"/><path d="M6.2 1.3 V20.6 M17.6 1.3 V7.6 M17.6 14.3 V20.6 M22.3 1.3 V20.6 M1.5 7.6 H6.2 M14 7.6 H27 M1.5 14.3 H6.2 M14 14.3 H27" stroke="#c6c6c6" stroke-width=".8" fill="none"/><rect x="1.5" y="1.3" width="25.5" height="19.3" fill="none" stroke="#c6c6c6" stroke-width="1"/></svg>
<svg class="abs" style="left:855.20px;top:77.40px" width="12" height="12" viewBox="-6 -6 12 12"><path d="M-2.6 -1.5 L0 1.5 L2.6 -1.5" fill="none" stroke="#a8a8a8" stroke-width="1.1" stroke-linecap="round" stroke-linejoin="round"/></svg>
<div class="abs" style="top:99.40px;height:16px;line-height:16px;font-size:10.8px;color:#929292;white-space:nowrap;letter-spacing:-0.254px;left:745.47px;width:200px;text-align:center;">Conditional</div>
<div class="abs" style="top:110.20px;height:16px;line-height:16px;font-size:10.8px;color:#929292;white-space:nowrap;letter-spacing:-0.18px;left:745.51px;width:200px;text-align:center;">Formatting</div>
<svg class="abs" style="left:878.00px;top:72.00px" width="32" height="27" viewBox="0 0 32 27"><rect x="1.4" y="1.3" width="25.4" height="19.3" fill="#fcfcfc"/><rect x="10.4" y="7.6" width="16.4" height="13" fill="#cfe2f5"/><path d="M18.8 7.6 V20.6 M10.4 14.3 H26.8" stroke="#b2d1ee" stroke-width=".8"/><path d="M10.4 1.3 V20.6 M18.8 1.3 V7.6 M1.4 7.6 H26.8 M1.4 14.3 H10.4" stroke="#c6c6c6" stroke-width=".8" fill="none"/><rect x="1.4" y="1.3" width="25.4" height="19.3" fill="none" stroke="#c6c6c6" stroke-width="1"/><rect x="19.6" y="15.2" width="8" height="6.6" fill="#f6f6f6" opacity="0"/><path d="M28.4 7.6 Q29.8 7.8 29.4 9.2 L17.5 21.3 L14.7 18.5 Z" fill="#fafafa" stroke="#c4c4c4" stroke-width=".9" stroke-linejoin="round"/><path d="M14.7 18.5 L17.5 21.3 Q15.4 27.2 7.6 26.0 Q10.8 24.4 11.4 22.2 Q12.4 20.2 14.7 18.5 Z" fill="#d3e5f6" stroke="#a9cdee" stroke-width=".85" stroke-linejoin="round"/></svg>
<svg class="abs" style="left:907.80px;top:77.40px" width="12" height="12" viewBox="-6 -6 12 12"><path d="M-2.6 -1.5 L0 1.5 L2.6 -1.5" fill="none" stroke="#a8a8a8" stroke-width="1.1" stroke-linecap="round" stroke-linejoin="round"/></svg>
<div class="abs" style="top:99.40px;height:16px;line-height:16px;font-size:10.5px;color:#929292;white-space:nowrap;letter-spacing:-0.301px;left:797.45px;width:200px;text-align:center;">Format</div>
<div class="abs" style="top:110.20px;height:16px;line-height:16px;font-size:10.7px;color:#929292;white-space:nowrap;letter-spacing:-0.309px;left:797.45px;width:200px;text-align:center;">as Table</div>
<svg class="abs" style="left:924.00px;top:72.00px" width="32" height="27" viewBox="0 0 32 27"><rect x="1.2" y="1.3" width="25.2" height="19.3" fill="#fcfcfc"/><rect x="6.1" y="6" width="16.1" height="9.9" fill="#cfe2f5" stroke="#b2d1ee" stroke-width=".8"/><path d="M6.1 1.3 V6 M6.1 15.9 V20.6 M22.2 1.3 V6 M22.2 15.9 V20.6 M1.2 6 H6.1 M22.2 6 H26.4 M1.2 15.9 H6.1 M22.2 15.9 H26.4" stroke="#c6c6c6" stroke-width=".8" fill="none"/><rect x="1.2" y="1.3" width="25.2" height="19.3" fill="none" stroke="#c6c6c6" stroke-width="1"/><path d="M28.2 7.6 Q29.6 7.8 29.2 9.2 L17.3 21.3 L14.5 18.5 Z" fill="#fafafa" stroke="#c4c4c4" stroke-width=".9" stroke-linejoin="round"/><path d="M14.5 18.5 L17.3 21.3 Q15.2 27.2 7.4 26.0 Q10.6 24.4 11.2 22.2 Q12.2 20.2 14.5 18.5 Z" fill="#d3e5f6" stroke="#a9cdee" stroke-width=".85" stroke-linejoin="round"/></svg>
<svg class="abs" style="left:953.80px;top:77.40px" width="12" height="12" viewBox="-6 -6 12 12"><path d="M-2.6 -1.5 L0 1.5 L2.6 -1.5" fill="none" stroke="#a8a8a8" stroke-width="1.1" stroke-linecap="round" stroke-linejoin="round"/></svg>
<div class="abs" style="top:99.40px;height:16px;line-height:16px;font-size:10.7px;color:#929292;white-space:nowrap;letter-spacing:-0.311px;left:843.04px;width:200px;text-align:center;">Cell</div>
<div class="abs" style="top:110.20px;height:16px;line-height:16px;font-size:10.8px;color:#929292;white-space:nowrap;letter-spacing:-0.282px;left:843.06px;width:200px;text-align:center;">Styles</div>
<div class="abs" style="left:974.50px;top:71px;width:1px;height:55px;background:#dddddd"></div>
<svg class="abs" style="left:985.00px;top:72.00px" width="33" height="23" viewBox="0 0 33 23"><rect x="3.8" y="1.3" width="24.9" height="19.5" fill="#fbfbfb" stroke="#cdcdcd" stroke-width="0.9"/><path d="M12.1 1.3 V20.8" stroke="#cdcdcd" stroke-width="0.9"/><path d="M20.9 1.3 V20.8" stroke="#cdcdcd" stroke-width="0.9"/><path d="M3.8 7.7 H28.7" stroke="#cdcdcd" stroke-width="0.9"/><path d="M3.8 15 H28.7" stroke="#cdcdcd" stroke-width="0.9"/><path d="M30.6 9.2 H11.4 V13.6 H30.6 Z" fill="#cfe2f5" stroke="#bcd8f1" stroke-width=".7"/><path d="M20.9 9.2 V13.6" stroke="#b4d2ee" stroke-width=".7"/><path d="M15.8 9.2 H8 V6 L1.8 11.4 L8 16.8 V13.6 H15.8" fill="#fbfdff" stroke="#b7d5f0" stroke-width=".9" stroke-linejoin="round"/></svg>
<svg class="abs" style="left:1017.00px;top:77.60px" width="12" height="12" viewBox="-6 -6 12 12"><path d="M-2.7 -1.5 L0 1.5 L2.7 -1.5" fill="none" stroke="#222" stroke-width="1.5" stroke-linecap="round" stroke-linejoin="round"/></svg>
<div class="abs" style="top:99.40px;height:16px;line-height:16px;font-size:10.9px;color:#1e1e1e;white-space:nowrap;letter-spacing:-0.302px;left:905.45px;width:200px;text-align:center;-webkit-text-stroke:0.35px #1e1e1e;">Insert</div>
<svg class="abs" style="left:1032.00px;top:72.00px" width="31" height="23" viewBox="0 0 31 23"><rect x="2.2" y="1.3" width="25.4" height="6.4" fill="#fcfcfc" stroke="#cdcdcd" stroke-width=".9"/><rect x="2.2" y="15" width="25.4" height="5.8" fill="#fcfcfc" stroke="#cdcdcd" stroke-width=".9"/><path d="M10.6 1.3 V7.7 M19.2 1.3 V7.7 M10.6 15 V20.8 M19.2 15 V20.8 M2.2 7.7 V15" stroke="#cdcdcd" stroke-width=".9"/><path d="M6 8.6 H17.6 L20.6 11.4 L17.6 14.2 H6 Z" fill="#cfe2f5" stroke="#b9d6f0" stroke-width=".8" stroke-linejoin="round"/><path d="M11.4 8.6 V14.2 M15.4 8.6 V14.2" stroke="#b4d2ee" stroke-width=".7"/><path d="M18.8 6.8 L28.2 16.2 M28.2 6.8 L18.8 16.2" stroke="#f6b3b0" stroke-width="1.15" stroke-linecap="round"/></svg>
<svg class="abs" style="left:1062.80px;top:77.60px" width="12" height="12" viewBox="-6 -6 12 12"><path d="M-2.7 -1.5 L0 1.5 L2.7 -1.5" fill="none" stroke="#222" stroke-width="1.5" stroke-linecap="round" stroke-linejoin="round"/></svg>
<div class="abs" style="top:99.40px;height:16px;line-height:16px;font-size:10.6px;color:#1e1e1e;white-space:nowrap;letter-spacing:-0.278px;left:951.26px;width:200px;text-align:center;-webkit-text-stroke:0.35px #1e1e1e;">Delete</div>
<svg class="abs" style="left:1078.50px;top:68.00px" width="29" height="27" viewBox="0 0 29 27"><path d="M7 2 H21.4 M7 0.7 V3.3 M21.4 0.7 V3.3" stroke="#3f8fd8" stroke-width="1"/><rect x="2" y="5.6" width="24.4" height="19" fill="#fdfdfd"/><rect x="8.2" y="12" width="11.9" height="6.6" fill="#3d8fdc"/><path d="M8.2 5.6 V24.6 M20.1 5.6 V24.6 M2 12 H26.4 M2 18.6 H26.4" stroke="#6e6e6e" stroke-width=".75"/><rect x="2" y="5.6" width="24.4" height="19" fill="none" stroke="#2b2b2b" stroke-width="1.2"/></svg>
<svg class="abs" style="left:1108.40px;top:77.60px" width="12" height="12" viewBox="-6 -6 12 12"><path d="M-2.7 -1.5 L0 1.5 L2.7 -1.5" fill="none" stroke="#222" stroke-width="1.5" stroke-linecap="round" stroke-linejoin="round"/></svg>
<div class="abs" style="top:99.40px;height:16px;line-height:16px;font-size:10.7px;color:#1e1e1e;white-space:nowrap;letter-spacing:-0.278px;left:998.06px;width:200px;text-align:center;-webkit-text-stroke:0.35px #1e1e1e;">Format</div>
<div class="abs" style="left:1129.30px;top:71px;width:1px;height:55px;background:#dddddd"></div>
<svg class="abs" style="left:1142.00px;top:68.50px" width="15" height="15" viewBox="0 0 15 15"><path d="M12.6 3.6 V1.6 H2 L8 7.4 L2 13.2 H12.6 V11.2" fill="none" stroke="#bdbdbd" stroke-width="1.05" stroke-linejoin="round"/></svg>
<div class="abs" style="top:69.20px;height:16px;line-height:16px;font-size:10.1px;color:#929292;white-space:nowrap;letter-spacing:-0.258px;left:1163.00px;">AutoSum</div>
<svg class="abs" style="left:1205.60px;top:71.20px" width="12" height="12" viewBox="-6 -6 12 12"><path d="M-2.5 -1.4 L0 1.4 L2.5 -1.4" fill="none" stroke="#a8a8a8" stroke-width="1.1" stroke-linecap="round" stroke-linejoin="round"/></svg>
<svg class="abs" style="left:1141.00px;top:88.50px" width="17" height="15" viewBox="0 0 17 15"><rect x="1" y="1" width="14.4" height="12.4" rx="0.8" fill="#fbfbfb" stroke="#c4c4c4" stroke-width="1"/><path d="M1 3.2 H15.4" stroke="#c4c4c4" stroke-width="1"/><path d="M8.2 5 V11 M5.8 8.6 L8.2 11 L10.6 8.6" fill="none" stroke="#9ccaf0" stroke-width="1" stroke-linejoin="round"/></svg>
<div class="abs" style="top:88.40px;height:16px;line-height:16px;font-size:10.8px;color:#929292;white-space:nowrap;letter-spacing:-0.265px;left:1163.00px;">Fill</div>
<svg class="abs" style="left:1177.20px;top:90.60px" width="12" height="12" viewBox="-6 -6 12 12"><path d="M-2.5 -1.4 L0 1.4 L2.5 -1.4" fill="none" stroke="#a8a8a8" stroke-width="1.1" stroke-linecap="round" stroke-linejoin="round"/></svg>
<svg class="abs" style="left:1140.50px;top:108.00px" width="18" height="17" viewBox="0 0 18 17"><path d="M10.4 1.8 L16 6.8 L8.2 15.2 L2.2 10.4 Z" fill="#fdfdfd" stroke="#a436a4" stroke-width="1.2" stroke-linejoin="round"/><path d="M5.2 7.4 L11 12.2 L8.2 15.2 L2.2 10.4 Z" fill="#c669c6" stroke="#a436a4" stroke-width="1" stroke-linejoin="round"/></svg>
<div class="abs" style="top:109.30px;height:16px;line-height:16px;font-size:10.4px;color:#1e1e1e;white-space:nowrap;letter-spacing:-0.276px;left:1162.00px;-webkit-text-stroke:0.35px #1e1e1e;">Clear</div>
<svg class="abs" style="left:1188.60px;top:111.20px" width="12" height="12" viewBox="-6 -6 12 12"><path d="M-2.7 -1.5 L0 1.5 L2.7 -1.5" fill="none" stroke="#222" stroke-width="1.5" stroke-linecap="round" stroke-linejoin="round"/></svg>
<svg class="abs" style="left:1222.00px;top:69.50px" width="28" height="28" viewBox="0 0 28 28"><text x="0.8" y="12.4" font-size="13.6" fill="#a9cdee" font-family="Liberation Sans, sans-serif">A</text><text x="1.4" y="25.4" font-size="13.2" fill="#c6c6c6" font-family="Liberation Sans, sans-serif">Z</text><path d="M12.2 7.8 H26.2 L21 14.6 V21.2 H17.6 V14.6 Z" fill="#f9f9f9" stroke="#c4c4c4" stroke-width="1" stroke-linejoin="round"/></svg>
<svg class="abs" style="left:1251.00px;top:77.00px" width="12" height="12" viewBox="-6 -6 12 12"><path d="M-2.5 -1.4 L0 1.4 L2.5 -1.4" fill="none" stroke="#a8a8a8" stroke-width="1.1" stroke-linecap="round" stroke-linejoin="round"/></svg>
<div class="abs" style="top:99.40px;height:16px;line-height:16px;font-size:10.6px;color:#929292;white-space:nowrap;letter-spacing:-0.291px;left:1140.65px;width:200px;text-align:center;">Sort &amp;</div>
<div class="abs" style="top:110.20px;height:16px;line-height:16px;font-size:10.8px;color:#929292;white-space:nowrap;letter-spacing:-0.3px;left:1140.65px;width:200px;text-align:center;">Filter</div>
<svg class="abs" style="left:1266.00px;top:68.50px" width="31" height="31" viewBox="0 0 31 31"><circle cx="18.4" cy="11" r="8.6" fill="#fbfbfb" stroke="#333" stroke-width="1.15"/><path d="M12.2 17.2 L2.6 27.4" stroke="#333" stroke-width="1.3" stroke-linecap="round"/></svg>
<svg class="abs" style="left:1297.20px;top:77.20px" width="12" height="12" viewBox="-6 -6 12 12"><path d="M-2.7 -1.5 L0 1.5 L2.7 -1.5" fill="none" stroke="#222" stroke-width="1.5" stroke-linecap="round" stroke-linejoin="round"/></svg>
<div class="abs" style="top:99.40px;height:16px;line-height:16px;font-size:10.5px;color:#1e1e1e;white-space:nowrap;letter-spacing:-0.319px;left:1185.64px;width:200px;text-align:center;-webkit-text-stroke:0.35px #1e1e1e;">Find &amp;</div>
<div class="abs" style="top:110.20px;height:16px;line-height:16px;font-size:10.9px;color:#1e1e1e;white-space:nowrap;letter-spacing:-0.309px;left:1185.65px;width:200px;text-align:center;-webkit-text-stroke:0.35px #1e1e1e;">Select</div>
<div class="abs" style="left:1318.30px;top:71px;width:1px;height:55px;background:#dddddd"></div>
<svg class="abs" style="left:1332.00px;top:68.50px" width="30" height="30" viewBox="0 0 30 30"><rect x="1.9" y="1.8" width="25.6" height="25.8" fill="#fbf3f1" stroke="#f3c0b7" stroke-width="1"/><rect x="4.4" y="4.4" width="8.8" height="8.8" fill="#fdfaf9" stroke="#f3c0b7" stroke-width="1"/><rect x="16.2" y="4.4" width="8.8" height="8.8" fill="#fdfaf9" stroke="#f3c0b7" stroke-width="1"/><rect x="4.4" y="16.2" width="8.8" height="8.8" fill="#fdfaf9" stroke="#f3c0b7" stroke-width="1"/><rect x="16.2" y="16.2" width="8.8" height="8.8" fill="#fdfaf9" stroke="#f3c0b7" stroke-width="1"/></svg>
<div class="abs" style="top:99.40px;height:16px;line-height:16px;font-size:10.8px;color:#929292;white-space:nowrap;letter-spacing:-0.228px;left:1247.69px;width:200px;text-align:center;">Add-ins</div>
<div class="abs" style="left:1377.30px;top:71px;width:1px;height:55px;background:#dddddd"></div>
<svg class="abs" style="left:1391.00px;top:67.50px" width="33" height="33" viewBox="0 0 33 33"><rect x="1.6" y="1.6" width="28.4" height="28.4" fill="#fbfbfb" stroke="#bdbdbd" stroke-width="1"/><path d="M1.6 5.4 H30 M1.6 17.4 H30 M1.6 24 H30 M10.6 17.4 V30 M20.6 5.4 V30" stroke="#cfcfcf" stroke-width=".9"/><rect x="1.6" y="1.6" width="28.4" height="3.8" fill="#e3e3e3" stroke="#bdbdbd" stroke-width="1"/><circle cx="15" cy="14.6" r="8.4" fill="#fafafa" stroke="#bdbdbd" stroke-width="1.1"/><path d="M21.2 20.6 L30.6 30" stroke="#bdbdbd" stroke-width="1.6"/><rect x="10.2" y="14.4" width="2.8" height="4.6" fill="#e9e9e9" stroke="#c9c9c9" stroke-width=".6"/><rect x="13.6" y="11.4" width="2.8" height="7.6" fill="#e9e9e9" stroke="#c9c9c9" stroke-width=".6"/><rect x="17" y="9.6" width="2.8" height="9.4" fill="#cfe2f5" stroke="#a9cdee" stroke-width=".6"/></svg>
<div class="abs" style="top:99.40px;height:16px;line-height:16px;font-size:10.5px;color:#929292;white-space:nowrap;letter-spacing:-0.309px;left:1306.45px;width:200px;text-align:center;">Analyze</div>
<div class="abs" style="top:110.20px;height:16px;line-height:16px;font-size:10.6px;color:#929292;white-space:nowrap;letter-spacing:-0.264px;left:1306.47px;width:200px;text-align:center;">Data</div>
<svg class="abs" style="left:1429.60px;top:67.60px" width="35.6" height="31.4" viewBox="0 0 34 30"><defs><linearGradient id="cpa" x1="0" y1="0" x2="0" y2="1"><stop offset="0" stop-color="#1b9cf2"/><stop offset=".45" stop-color="#2fae8c"/><stop offset=".75" stop-color="#a9c928"/><stop offset="1" stop-color="#fbd00c"/></linearGradient><linearGradient id="cpc" x1="0" y1="0" x2="0" y2="1"><stop offset="0" stop-color="#a94df0"/><stop offset=".45" stop-color="#ee5596"/><stop offset=".8" stop-color="#fb8a4a"/><stop offset="1" stop-color="#ff9d2a"/></linearGradient></defs><path d="M17.6 3.2 H22.4 Q24 3.2 24.4 4.8 L25.6 10 H20.4 Z" fill="#1746cf"/><path d="M10.4 20.6 L11.8 25.2 Q12.4 26.6 13.8 26.6 H17.2 L18.4 20.6 Z" fill="#e9421c"/><path d="M11 3.2 H19.6 Q21.2 3.2 20.6 4.8 L16.2 19.4 Q15.8 21 14.2 21 H6 Q2.8 21 3.8 18 L7.6 5.6 Q8.4 3.2 11 3.2 Z" fill="url(#cpa)"/><path d="M22.8 26.6 H14.2 Q12.6 26.6 13.2 25 L17.6 11 Q18 9.4 19.6 9.4 H27.8 Q31 9.4 30 12.4 L26.2 24.2 Q25.4 26.6 22.8 26.6 Z" fill="url(#cpc)"/></svg>
<div class="abs" style="top:99.40px;height:16px;line-height:16px;font-size:11px;color:#1e1e1e;white-space:nowrap;letter-spacing:-0.29px;left:1347.06px;width:200px;text-align:center;-webkit-text-stroke:0.35px #1e1e1e;">Copilot</div>

<div class="abs" style="left:0;top:130px;width:1536px;height:1px;background:#e1e1e1"></div>
<div class="abs" style="left:0;top:131px;width:1536px;height:22.8px;background:#fdfdfd"></div>
<div class="abs" style="left:0;top:153.8px;width:1536px;height:4.2px;background:linear-gradient(#d2d2d2,#d6d6d6 60%,#dedede)"></div>
<div class="abs" style="left:0;top:131.5px;width:77.5px;height:22.3px;background:#fff;border-right:1px solid #e3e3e3"></div>
<div class="abs" style="top:134.60px;height:16px;line-height:16px;font-size:11.9px;color:#1d1d1d;white-space:nowrap;letter-spacing:-0.306px;left:9.00px;">Chart 20</div>
<svg class="abs" style="left:69.50px;top:133.50px" width="8" height="17" viewBox="0 0 8 17"><polygon points="4,0.8 6.6,5.4 1.4,5.4" fill="#4a4a4a"/><polygon points="4,16.2 6.6,11.6 1.4,11.6" fill="#4a4a4a"/></svg>
<svg class="abs" style="left:90.50px;top:138.00px" width="12" height="12" viewBox="0 0 12 12"><path d="M1.6 1.6 L10 10.4 M10 1.6 L1.6 10.4" stroke="#c6c6c6" stroke-width="1.4" stroke-linecap="round"/></svg>
<svg class="abs" style="left:116.00px;top:138.00px" width="15" height="12" viewBox="0 0 15 12"><path d="M1.4 6.4 L5.2 10.4 L13.2 1.6" fill="none" stroke="#c6c6c6" stroke-width="1.5" stroke-linecap="round" stroke-linejoin="round"/></svg>
<div class="abs" style="left:138px;top:133px;width:16px;height:20px;line-height:20px;font-family:'Liberation Serif',serif;font-style:italic;font-size:16px;color:#b9b9b9;letter-spacing:-0.6px">fx</div>
<svg class="abs" style="left:153.50px;top:137.60px" width="12" height="12" viewBox="-6 -6 12 12"><path d="M-2.4 -1.3 L0 1.3 L2.4 -1.3" fill="none" stroke="#dcdcdc" stroke-width="1.1" stroke-linecap="round" stroke-linejoin="round"/></svg>
<div class="abs" style="left:165.5px;top:132px;width:1348.5px;height:21.4px;background:#fff;border:1px solid #ececec;border-radius:3px 0 0 3px"></div>
<div class="abs" style="top:134.80px;height:16px;line-height:16px;font-size:11.4px;color:#141414;white-space:nowrap;letter-spacing:-0.034px;left:172.50px;">=SERIES(Sheet1!$B$2,Sheet1!$A$3:$A$16,Sheet1!$B$3:$B$16,1)</div>
<div class="abs" style="left:1514px;top:133.8px;width:21.6px;height:18.4px;background:#fff;border:1px solid #e6e6e6;border-radius:3px"></div>
<svg class="abs" style="left:1520.50px;top:140.20px" width="9" height="7" viewBox="0 0 9 7"><polygon points="0.8,0.8 8.2,0.8 4.5,5.8" fill="#4a4a4a"/></svg>
</div>
<div id="sheet">
<svg id="grid" width="1536" height="757" viewBox="0 158 1536 757">
<g stroke="#dadada" stroke-width="1">
<line x1="28" y1="204.00" x2="1536" y2="204.00"/>
<line x1="28" y1="245.50" x2="1536" y2="245.50"/>
<line x1="28" y1="264.70" x2="1536" y2="264.70"/>
<line x1="28" y1="283.90" x2="1536" y2="283.90"/>
<line x1="28" y1="303.10" x2="1536" y2="303.10"/>
<line x1="28" y1="322.30" x2="1536" y2="322.30"/>
<line x1="28" y1="341.50" x2="1536" y2="341.50"/>
<line x1="28" y1="360.70" x2="1536" y2="360.70"/>
<line x1="28" y1="379.90" x2="1536" y2="379.90"/>
<line x1="28" y1="399.10" x2="1536" y2="399.10"/>
<line x1="28" y1="418.30" x2="1536" y2="418.30"/>
<line x1="28" y1="437.50" x2="1536" y2="437.50"/>
<line x1="28" y1="456.70" x2="1536" y2="456.70"/>
<line x1="28" y1="475.90" x2="1536" y2="475.90"/>
<line x1="28" y1="495.10" x2="1536" y2="495.10"/>
<line x1="28" y1="514.30" x2="1536" y2="514.30"/>
<line x1="28" y1="533.50" x2="1536" y2="533.50"/>
<line x1="28" y1="552.70" x2="1536" y2="552.70"/>
<line x1="28" y1="571.90" x2="1536" y2="571.90"/>
<line x1="28" y1="591.10" x2="1536" y2="591.10"/>
<line x1="28" y1="610.30" x2="1536" y2="610.30"/>
<line x1="28" y1="629.50" x2="1536" y2="629.50"/>
<line x1="28" y1="648.70" x2="1536" y2="648.70"/>
<line x1="28" y1="667.90" x2="1536" y2="667.90"/>
<line x1="28" y1="687.10" x2="1536" y2="687.10"/>
<line x1="28" y1="706.30" x2="1536" y2="706.30"/>
<line x1="28" y1="725.50" x2="1536" y2="725.50"/>
<line x1="28" y1="744.70" x2="1536" y2="744.70"/>
<line x1="28" y1="763.90" x2="1536" y2="763.90"/>
<line x1="28" y1="783.10" x2="1536" y2="783.10"/>
<line x1="28" y1="802.30" x2="1536" y2="802.30"/>
<line x1="28" y1="821.50" x2="1536" y2="821.50"/>
<line x1="28" y1="840.70" x2="1536" y2="840.70"/>
<line x1="28" y1="859.90" x2="1536" y2="859.90"/>
<line x1="28" y1="879.10" x2="1536" y2="879.10"/>
<line x1="28" y1="898.30" x2="1536" y2="898.30"/>
<line x1="185.50" y1="184" x2="185.50" y2="915"/>
<line x1="322.50" y1="184" x2="322.50" y2="915"/>
<line x1="390.22" y1="184" x2="390.22" y2="915"/>
<line x1="457.94" y1="184" x2="457.94" y2="915"/>
<line x1="525.66" y1="184" x2="525.66" y2="915"/>
<line x1="593.38" y1="184" x2="593.38" y2="915"/>
<line x1="661.10" y1="184" x2="661.10" y2="915"/>
<line x1="728.82" y1="184" x2="728.82" y2="915"/>
<line x1="796.54" y1="184" x2="796.54" y2="915"/>
<line x1="864.26" y1="184" x2="864.26" y2="915"/>
<line x1="931.98" y1="184" x2="931.98" y2="915"/>
<line x1="999.70" y1="184" x2="999.70" y2="915"/>
<line x1="1067.42" y1="184" x2="1067.42" y2="915"/>
<line x1="1135.14" y1="184" x2="1135.14" y2="915"/>
<line x1="1202.86" y1="184" x2="1202.86" y2="915"/>
<line x1="1270.58" y1="184" x2="1270.58" y2="915"/>
<line x1="1338.30" y1="184" x2="1338.30" y2="915"/>
<line x1="1406.02" y1="184" x2="1406.02" y2="915"/>
<line x1="1473.74" y1="184" x2="1473.74" y2="915"/>
</g></svg>
<div id="colhead"></div>
<div id="corner"><svg width="28" height="27" viewBox="0 0 28 27"><polygon points="4.5,23.5 25.5,23.5 25.5,4" fill="#dcdcdc"/></svg></div>
<div class="ch" style="left:-21.50px;width:207.00px">C</div><div class="ch" style="left:185.50px;width:137.00px">D</div><div class="ch" style="left:322.50px;width:67.72px">E</div><div class="ch" style="left:390.22px;width:67.72px">F</div><div class="ch" style="left:457.94px;width:67.72px">G</div><div class="ch" style="left:525.66px;width:67.72px">H</div><div class="ch" style="left:593.38px;width:67.72px">I</div><div class="ch" style="left:661.10px;width:67.72px">J</div><div class="ch" style="left:728.82px;width:67.72px">K</div><div class="ch" style="left:796.54px;width:67.72px">L</div><div class="ch" style="left:864.26px;width:67.72px">M</div><div class="ch" style="left:931.98px;width:67.72px">N</div><div class="ch" style="left:999.70px;width:67.72px">O</div><div class="ch" style="left:1067.42px;width:67.72px">P</div><div class="ch" style="left:1135.14px;width:67.72px">Q</div><div class="ch" style="left:1202.86px;width:67.72px">R</div><div class="ch" style="left:1270.58px;width:67.72px">S</div><div class="ch" style="left:1338.30px;width:67.72px">T</div><div class="ch" style="left:1406.02px;width:67.72px">U</div><div class="ch" style="left:1473.74px;width:67.72px">V</div>
<svg id="chsep" width="1536" height="27" viewBox="0 158 1536 27"><g stroke="#e2e2e2" stroke-width="1"><line x1="28.00" y1="158" x2="28.00" y2="185"/><line x1="185.50" y1="158" x2="185.50" y2="185"/><line x1="322.50" y1="158" x2="322.50" y2="185"/><line x1="390.22" y1="158" x2="390.22" y2="185"/><line x1="457.94" y1="158" x2="457.94" y2="185"/><line x1="525.66" y1="158" x2="525.66" y2="185"/><line x1="593.38" y1="158" x2="593.38" y2="185"/><line x1="661.10" y1="158" x2="661.10" y2="185"/><line x1="728.82" y1="158" x2="728.82" y2="185"/><line x1="796.54" y1="158" x2="796.54" y2="185"/><line x1="864.26" y1="158" x2="864.26" y2="185"/><line x1="931.98" y1="158" x2="931.98" y2="185"/><line x1="999.70" y1="158" x2="999.70" y2="185"/><line x1="1067.42" y1="158" x2="1067.42" y2="185"/><line x1="1135.14" y1="158" x2="1135.14" y2="185"/><line x1="1202.86" y1="158" x2="1202.86" y2="185"/><line x1="1270.58" y1="158" x2="1270.58" y2="185"/><line x1="1338.30" y1="158" x2="1338.30" y2="185"/><line x1="1406.02" y1="158" x2="1406.02" y2="185"/><line x1="1473.74" y1="158" x2="1473.74" y2="185"/></g></svg>
<div id="rowhead"></div>
<svg class="abs" style="left:0;top:158px" width="28" height="757" viewBox="0 158 28 757"><g stroke="#e7e7e7" stroke-width="1"><line x1="0" y1="204.00" x2="27.5" y2="204.00"/><line x1="0" y1="245.50" x2="27.5" y2="245.50"/><line x1="0" y1="264.70" x2="27.5" y2="264.70"/><line x1="0" y1="283.90" x2="27.5" y2="283.90"/><line x1="0" y1="303.10" x2="27.5" y2="303.10"/><line x1="0" y1="322.30" x2="27.5" y2="322.30"/><line x1="0" y1="341.50" x2="27.5" y2="341.50"/><line x1="0" y1="360.70" x2="27.5" y2="360.70"/><line x1="0" y1="379.90" x2="27.5" y2="379.90"/><line x1="0" y1="399.10" x2="27.5" y2="399.10"/><line x1="0" y1="418.30" x2="27.5" y2="418.30"/><line x1="0" y1="437.50" x2="27.5" y2="437.50"/><line x1="0" y1="456.70" x2="27.5" y2="456.70"/><line x1="0" y1="475.90" x2="27.5" y2="475.90"/><line x1="0" y1="495.10" x2="27.5" y2="495.10"/><line x1="0" y1="514.30" x2="27.5" y2="514.30"/><line x1="0" y1="533.50" x2="27.5" y2="533.50"/><line x1="0" y1="552.70" x2="27.5" y2="552.70"/><line x1="0" y1="571.90" x2="27.5" y2="571.90"/><line x1="0" y1="591.10" x2="27.5" y2="591.10"/><line x1="0" y1="610.30" x2="27.5" y2="610.30"/><line x1="0" y1="629.50" x2="27.5" y2="629.50"/><line x1="0" y1="648.70" x2="27.5" y2="648.70"/><line x1="0" y1="667.90" x2="27.5" y2="667.90"/><line x1="0" y1="687.10" x2="27.5" y2="687.10"/><line x1="0" y1="706.30" x2="27.5" y2="706.30"/><line x1="0" y1="725.50" x2="27.5" y2="725.50"/><line x1="0" y1="744.70" x2="27.5" y2="744.70"/><line x1="0" y1="763.90" x2="27.5" y2="763.90"/><line x1="0" y1="783.10" x2="27.5" y2="783.10"/><line x1="0" y1="802.30" x2="27.5" y2="802.30"/><line x1="0" y1="821.50" x2="27.5" y2="821.50"/><line x1="0" y1="840.70" x2="27.5" y2="840.70"/><line x1="0" y1="859.90" x2="27.5" y2="859.90"/><line x1="0" y1="879.10" x2="27.5" y2="879.10"/><line x1="0" y1="898.30" x2="27.5" y2="898.30"/></g></svg>
<div class="rh" style="top:184.50px;height:19.50px;line-height:20.50px">1</div><div class="rh" style="top:204.00px;height:41.50px;line-height:65.50px">2</div><div class="rh" style="top:245.50px;height:19.20px;line-height:20.20px">3</div><div class="rh" style="top:264.70px;height:19.20px;line-height:20.20px">4</div><div class="rh" style="top:283.90px;height:19.20px;line-height:20.20px">5</div><div class="rh" style="top:303.10px;height:19.20px;line-height:20.20px">6</div><div class="rh" style="top:322.30px;height:19.20px;line-height:20.20px">7</div><div class="rh" style="top:341.50px;height:19.20px;line-height:20.20px">8</div><div class="rh" style="top:360.70px;height:19.20px;line-height:20.20px">9</div><div class="rh" style="top:379.90px;height:19.20px;line-height:20.20px">10</div><div class="rh" style="top:399.10px;height:19.20px;line-height:20.20px">11</div><div class="rh" style="top:418.30px;height:19.20px;line-height:20.20px">12</div><div class="rh" style="top:437.50px;height:19.20px;line-height:20.20px">13</div><div class="rh" style="top:456.70px;height:19.20px;line-height:20.20px">14</div><div class="rh" style="top:475.90px;height:19.20px;line-height:20.20px">15</div><div class="rh" style="top:495.10px;height:19.20px;line-height:20.20px">16</div><div class="rh" style="top:514.30px;height:19.20px;line-height:20.20px">17</div><div class="rh" style="top:533.50px;height:19.20px;line-height:20.20px">18</div><div class="rh" style="top:552.70px;height:19.20px;line-height:20.20px">19</div><div class="rh" style="top:571.90px;height:19.20px;line-height:20.20px">20</div><div class="rh" style="top:591.10px;height:19.20px;line-height:20.20px">21</div><div class="rh" style="top:610.30px;height:19.20px;line-height:20.20px">22</div><div class="rh" style="top:629.50px;height:19.20px;line-height:20.20px">23</div><div class="rh" style="top:648.70px;height:19.20px;line-height:20.20px">24</div><div class="rh" style="top:667.90px;height:19.20px;line-height:20.20px">25</div><div class="rh" style="top:687.10px;height:19.20px;line-height:20.20px">26</div><div class="rh" style="top:706.30px;height:19.20px;line-height:20.20px">27</div><div class="rh" style="top:725.50px;height:19.20px;line-height:20.20px">28</div><div class="rh" style="top:744.70px;height:19.20px;line-height:20.20px">29</div><div class="rh" style="top:763.90px;height:19.20px;line-height:20.20px">30</div><div class="rh" style="top:783.10px;height:19.20px;line-height:20.20px">31</div><div class="rh" style="top:802.30px;height:19.20px;line-height:20.20px">32</div><div class="rh" style="top:821.50px;height:19.20px;line-height:20.20px">33</div><div class="rh" style="top:840.70px;height:19.20px;line-height:20.20px">34</div><div class="rh" style="top:859.90px;height:19.20px;line-height:20.20px">35</div><div class="rh" style="top:879.10px;height:19.20px;line-height:20.20px">36</div><div class="rh" style="top:898.30px;height:19.20px;line-height:20.20px">37</div>
<div class="hc" style="left:28px;top:204.5px;width:157px;height:41px;line-height:41px;text-align:left;padding-left:29px;letter-spacing:-0.5px">End Date</div>
<div class="hc" style="left:186px;top:204.5px;width:136px;height:41px;line-height:19px;padding-top:1.5px;box-sizing:border-box">Duration<br>(in days)</div>
<div style="position:absolute;left:184.7px;top:204px;width:1.6px;height:42px;background:#222"></div>
<div style="position:absolute;left:28px;top:203.6px;width:294.5px;height:1px;background:#a9a9a9"></div>
<div style="position:absolute;left:28px;top:244.8px;width:294.5px;height:1.4px;background:#333"></div>
<div class="cell" style="left:28.7px;top:245.50px;width:107px">12-Aug-25</div><div class="cell" style="left:186px;top:245.50px;width:137px">2</div>
<div class="cell" style="left:28.7px;top:264.70px;width:107px">14-Aug-25</div><div class="cell" style="left:186px;top:264.70px;width:137px">1</div>
<div class="cell" style="left:28.7px;top:283.90px;width:107px">18-Aug-25</div><div class="cell" style="left:186px;top:283.90px;width:137px">3</div>
<div class="cell" style="left:28.7px;top:303.10px;width:107px">20-Aug-25</div><div class="cell" style="left:186px;top:303.10px;width:137px">1</div>
<div class="cell" style="left:28.7px;top:322.30px;width:107px">25-Aug-25</div><div class="cell" style="left:186px;top:322.30px;width:137px">4</div>
<div class="cell" style="left:28.7px;top:341.50px;width:107px">30-Aug-25</div><div class="cell" style="left:186px;top:341.50px;width:137px">4</div>
<div class="cell" style="left:28.7px;top:360.70px;width:107px">2-Sep-25</div><div class="cell" style="left:186px;top:360.70px;width:137px">2</div>
<div class="cell" style="left:28.7px;top:379.90px;width:107px">12-Sep-25</div><div class="cell" style="left:186px;top:379.90px;width:137px">9</div>
<div class="cell" style="left:28.7px;top:399.10px;width:107px">20-Sep-25</div><div class="cell" style="left:186px;top:399.10px;width:137px">7</div>
<div class="cell" style="left:28.7px;top:418.30px;width:107px">24-Sep-25</div><div class="cell" style="left:186px;top:418.30px;width:137px">3</div>
<div class="cell" style="left:28.7px;top:437.50px;width:107px">27-Sep-25</div><div class="cell" style="left:186px;top:437.50px;width:137px">2</div>
<div class="cell" style="left:28.7px;top:456.70px;width:107px">29-Sep-25</div><div class="cell" style="left:186px;top:456.70px;width:137px">1</div>
<div class="cell" style="left:28.7px;top:475.90px;width:107px">30-Sep-25</div><div class="cell" style="left:186px;top:475.90px;width:137px">0</div>
<div class="cell" style="left:28.7px;top:495.10px;width:107px">3-Oct-25</div><div class="cell" style="left:186px;top:495.10px;width:137px">2</div>
<svg id="chart" width="1100" height="540" viewBox="315 197 1100 540" font-family='"Liberation Sans", sans-serif'>
<rect x="323.5" y="204.3" width="1082.10" height="523.80" fill="#fff" stroke="#d3d3d3" stroke-width="5"/>
<rect x="323.5" y="204.3" width="1082.10" height="523.80" fill="none" stroke="#f7f7f7" stroke-width="2.8"/>
<g stroke="#dcdcdc" stroke-width="1">
<line x1="454.50" y1="268.0" x2="454.50" y2="668.0"/>
<line x1="556.03" y1="268.0" x2="556.03" y2="668.0"/>
<line x1="657.56" y1="268.0" x2="657.56" y2="668.0"/>
<line x1="759.09" y1="268.0" x2="759.09" y2="668.0"/>
<line x1="860.62" y1="268.0" x2="860.62" y2="668.0"/>
<line x1="962.15" y1="268.0" x2="962.15" y2="668.0"/>
<line x1="1063.68" y1="268.0" x2="1063.68" y2="668.0"/>
<line x1="1165.21" y1="268.0" x2="1165.21" y2="668.0"/>
<line x1="1266.74" y1="268.0" x2="1266.74" y2="668.0"/>
<line x1="1368.27" y1="268.0" x2="1368.27" y2="668.0"/>
</g>
<text x="864" y="231.5" font-size="16.5" fill="#595959" text-anchor="middle">Chart Title</text>
<g font-size="11" fill="#595959" text-anchor="middle">
<text x="454.5" y="255.5">7/12/25</text>
<text x="556.0" y="255.5">7/22/25</text>
<text x="657.6" y="255.5">8/1/25</text>
<text x="759.1" y="255.5">8/11/25</text>
<text x="860.6" y="255.5">8/21/25</text>
<text x="962.1" y="255.5">8/31/25</text>
<text x="1063.7" y="255.5">9/10/25</text>
<text x="1165.2" y="255.5">9/20/25</text>
<text x="1266.7" y="255.5">9/30/25</text>
<text x="1368.3" y="255.5">10/10/25</text>
</g>
<g font-size="10.55" fill="#595959" text-anchor="end">
<text x="444" y="285.6">Define project goals</text>
<text x="444" y="314.2">Identify target users</text>
<text x="444" y="342.7">Competitive analysis</text>
<text x="444" y="371.3">Scope definition</text>
<text x="444" y="399.9">Wireframe creation</text>
<text x="444" y="428.4">Visual design concepts</text>
<text x="444" y="457.0">Stakeholder review</text>
<text x="444" y="485.6">Front-end development</text>
<text x="444" y="514.2">Back-end integration</text>
<text x="444" y="542.7">Internal testing</text>
<text x="444" y="571.3">Final QA &amp; bug fixing</text>
<text x="444" y="599.9">Stakeholder approval</text>
<text x="444" y="628.4">Website launch</text>
<text x="444" y="657.0">Post-launch review</text>
</g>
<rect x="454.5" y="276.5" width="294.4" height="11.6" fill="#4e81bd"/>
<rect x="748.9" y="276.5" width="20.3" height="11.6" fill="#c0504d"/>
<rect x="454.5" y="305.1" width="324.9" height="11.6" fill="#4e81bd"/>
<rect x="779.4" y="305.1" width="10.2" height="11.6" fill="#c0504d"/>
<rect x="454.5" y="333.6" width="345.2" height="11.6" fill="#4e81bd"/>
<rect x="799.7" y="333.6" width="30.5" height="11.6" fill="#c0504d"/>
<rect x="454.5" y="362.2" width="385.8" height="11.6" fill="#4e81bd"/>
<rect x="840.3" y="362.2" width="10.2" height="11.6" fill="#c0504d"/>
<rect x="454.5" y="390.8" width="406.1" height="11.6" fill="#4e81bd"/>
<rect x="860.6" y="390.8" width="40.6" height="11.6" fill="#c0504d"/>
<rect x="454.5" y="419.3" width="456.9" height="11.6" fill="#4e81bd"/>
<rect x="911.4" y="419.3" width="40.6" height="11.6" fill="#c0504d"/>
<rect x="454.5" y="447.9" width="507.6" height="11.6" fill="#4e81bd"/>
<rect x="962.1" y="447.9" width="20.3" height="11.6" fill="#c0504d"/>
<rect x="454.5" y="476.5" width="538.1" height="11.6" fill="#4e81bd"/>
<rect x="992.6" y="476.5" width="91.4" height="11.6" fill="#c0504d"/>
<rect x="454.5" y="505.1" width="639.6" height="11.6" fill="#4e81bd"/>
<rect x="1094.1" y="505.1" width="71.1" height="11.6" fill="#c0504d"/>
<rect x="454.5" y="533.6" width="720.9" height="11.6" fill="#4e81bd"/>
<rect x="1175.4" y="533.6" width="30.5" height="11.6" fill="#c0504d"/>
<rect x="454.5" y="562.2" width="761.5" height="11.6" fill="#4e81bd"/>
<rect x="1216.0" y="562.2" width="20.3" height="11.6" fill="#c0504d"/>
<rect x="454.5" y="590.8" width="791.9" height="11.6" fill="#4e81bd"/>
<rect x="1246.4" y="590.8" width="10.2" height="11.6" fill="#c0504d"/>
<rect x="454.5" y="619.3" width="812.2" height="11.6" fill="#4e81bd"/>
<rect x="454.5" y="647.9" width="822.4" height="11.6" fill="#4e81bd"/>
<rect x="1276.9" y="647.9" width="20.3" height="11.6" fill="#c0504d"/>
<g fill="#fff" stroke="#3994ee" stroke-width="1.15">
<circle cx="454.5" cy="276.5" r="2.7"/>
<circle cx="454.5" cy="288.1" r="2.7"/>
<circle cx="748.9" cy="276.5" r="2.7"/>
<circle cx="748.9" cy="288.1" r="2.7"/>
<circle cx="454.5" cy="305.1" r="2.7"/>
<circle cx="454.5" cy="316.7" r="2.7"/>
<circle cx="779.4" cy="305.1" r="2.7"/>
<circle cx="779.4" cy="316.7" r="2.7"/>
<circle cx="454.5" cy="333.6" r="2.7"/>
<circle cx="454.5" cy="345.2" r="2.7"/>
<circle cx="799.7" cy="333.6" r="2.7"/>
<circle cx="799.7" cy="345.2" r="2.7"/>
<circle cx="454.5" cy="362.2" r="2.7"/>
<circle cx="454.5" cy="373.8" r="2.7"/>
<circle cx="840.3" cy="362.2" r="2.7"/>
<circle cx="840.3" cy="373.8" r="2.7"/>
<circle cx="454.5" cy="390.8" r="2.7"/>
<circle cx="454.5" cy="402.4" r="2.7"/>
<circle cx="860.6" cy="390.8" r="2.7"/>
<circle cx="860.6" cy="402.4" r="2.7"/>
<circle cx="454.5" cy="419.3" r="2.7"/>
<circle cx="454.5" cy="430.9" r="2.7"/>
<circle cx="911.4" cy="419.3" r="2.7"/>
<circle cx="911.4" cy="430.9" r="2.7"/>
<circle cx="454.5" cy="447.9" r="2.7"/>
<circle cx="454.5" cy="459.5" r="2.7"/>
<circle cx="962.1" cy="447.9" r="2.7"/>
<circle cx="962.1" cy="459.5" r="2.7"/>
<circle cx="454.5" cy="476.5" r="2.7"/>
<circle cx="454.5" cy="488.1" r="2.7"/>
<circle cx="992.6" cy="476.5" r="2.7"/>
<circle cx="992.6" cy="488.1" r="2.7"/>
<circle cx="454.5" cy="505.1" r="2.7"/>
<circle cx="454.5" cy="516.7" r="2.7"/>
<circle cx="1094.1" cy="505.1" r="2.7"/>
<circle cx="1094.1" cy="516.7" r="2.7"/>
<circle cx="454.5" cy="533.6" r="2.7"/>
<circle cx="454.5" cy="545.2" r="2.7"/>
<circle cx="1175.4" cy="533.6" r="2.7"/>
<circle cx="1175.4" cy="545.2" r="2.7"/>
<circle cx="454.5" cy="562.2" r="2.7"/>
<circle cx="454.5" cy="573.8" r="2.7"/>
<circle cx="1216.0" cy="562.2" r="2.7"/>
<circle cx="1216.0" cy="573.8" r="2.7"/>
<circle cx="454.5" cy="590.8" r="2.7"/>
<circle cx="454.5" cy="602.4" r="2.7"/>
<circle cx="1246.4" cy="590.8" r="2.7"/>
<circle cx="1246.4" cy="602.4" r="2.7"/>
<circle cx="454.5" cy="619.3" r="2.7"/>
<circle cx="454.5" cy="630.9" r="2.7"/>
<circle cx="1266.7" cy="619.3" r="2.7"/>
<circle cx="1266.7" cy="630.9" r="2.7"/>
<circle cx="454.5" cy="647.9" r="2.7"/>
<circle cx="454.5" cy="659.5" r="2.7"/>
<circle cx="1276.9" cy="647.9" r="2.7"/>
<circle cx="1276.9" cy="659.5" r="2.7"/>
</g>
<rect x="807.5" y="689.5" width="6.5" height="6.5" fill="#4e81bd"/>
<rect x="875" y="689.5" width="6.5" height="6.5" fill="#c0504d"/>
<g font-size="10.6" fill="#595959"><text x="816.5" y="696.5">Start Date</text><text x="884.5" y="696.5">Duration</text><text x="884.5" y="711">(in days)</text></g>
<g fill="#fff" stroke="#bdbdbd" stroke-width="1">
<rect x="319.8" y="200.4" width="7.4" height="7.8" rx="2"/>
<rect x="860.8" y="200.4" width="7.4" height="7.8" rx="2"/>
<rect x="1401.9" y="200.4" width="7.4" height="7.8" rx="2"/>
<rect x="319.8" y="462.3" width="7.4" height="7.8" rx="2"/>
<rect x="1401.9" y="462.3" width="7.4" height="7.8" rx="2"/>
<rect x="319.8" y="724.2" width="7.4" height="7.8" rx="2"/>
<rect x="860.8" y="724.2" width="7.4" height="7.8" rx="2"/>
<rect x="1401.9" y="724.2" width="7.4" height="7.8" rx="2"/>
</g>
</svg>
</div>
<div id="menu">
<div class="hl"></div>
<div class="mi" style="top:5.5px;font-size:12.7px;letter-spacing:-0.302px;">Delete</div>
<div class="mi" style="top:25.5px;font-size:12.8px;letter-spacing:-0.221px;">Reset to Match Style</div>
<div class="sep" style="top:50.5px"></div>
<div class="mi" style="top:55.5px;font-size:12.8px;letter-spacing:-0.298px;">Change Chart Type</div>
<svg class="chev" style="top:60.5px" viewBox="0 0 8 10"><path d="M2 1.2 L6 5 L2 8.8" fill="none" stroke="#222" stroke-width="1.5" stroke-linecap="round" stroke-linejoin="round"/></svg>
<div class="mi" style="top:76.5px;font-size:12.8px;letter-spacing:-0.241px;">Select Data...</div>
<div class="mi dis" style="top:96.5px;font-size:12.8px;letter-spacing:-0.13px;">3-D Rotation...</div>
<div class="sep" style="top:120.5px"></div>
<div class="mi" style="top:126.5px;font-size:12.7px;letter-spacing:-0.279px;">Add Data Labels</div>
<div class="mi dis" style="top:147px;font-size:12.8px;letter-spacing:-0.224px;">Add Trendline...</div>
<div class="mi" style="top:166.5px;font-size:12.8px;letter-spacing:-0.287px;color:#fff;-webkit-text-stroke:0.25px #fff;">Format Data Series...</div>
<div class="sep" style="top:191px"></div>
<div class="mi" style="top:196.5px;font-size:12.8px;letter-spacing:-0.117px;">Writing Tools</div>
<svg class="chev" style="top:201.5px" viewBox="0 0 8 10"><path d="M2 1.2 L6 5 L2 8.8" fill="none" stroke="#222" stroke-width="1.5" stroke-linecap="round" stroke-linejoin="round"/></svg>
<div class="sep" style="top:220.8px"></div>
<div class="mi" style="top:226.5px;font-size:12.8px;letter-spacing:-0.312px;">AutoFill</div>
<svg class="chev" style="top:231.5px" viewBox="0 0 8 10"><path d="M2 1.2 L6 5 L2 8.8" fill="none" stroke="#222" stroke-width="1.5" stroke-linecap="round" stroke-linejoin="round"/></svg>
</div>
<div id="tabs">
<svg class="abs" style="left:10px;top:5.5px" width="36" height="14" viewBox="0 0 36 14"><polygon points="10.6,2 10.6,11.6 3.6,6.8" fill="#c8c8c8"/><polygon points="24,2 24,11.6 31,6.8" fill="#c8c8c8"/></svg>
<div class="abs" style="left:55.5px;top:-1px;width:72px;height:21px;background:#fff;border:1px solid #d9d9d9;border-top:none;border-radius:0 0 3px 3px;box-shadow:0 1px 1.5px rgba(0,0,0,.12)"></div>
<div class="abs" style="left:56px;top:0.5px;width:71px;height:20px;line-height:20px;text-align:center;font-size:11px;font-weight:bold;color:#1e8a4c">Sheet1</div>
<div class="abs" style="left:136px;top:-0.5px;width:18px;height:22px;line-height:21px;text-align:center;font-size:17px;color:#2a2a2a">+</div>
<div class="abs" style="left:162px;top:1px;width:1px;height:18px;background:#dedede"></div>
</div>
<div id="status">
<div class="abs" style="left:22.5px;top:0;height:20px;line-height:20.4px;font-size:11.2px;letter-spacing:-0.281px;color:#555;white-space:nowrap">Ready</div>
<svg class="abs" style="left:71px;top:2px" width="17" height="16" viewBox="0 0 17 16"><circle cx="7.6" cy="2.6" r="1.7" fill="none" stroke="#6a6a6a" stroke-width="1"/><path d="M2 5.6 Q7.6 7.4 13.2 5.6 M5.8 6.6 V10 L3.6 14.6 M9.4 6.6 V9.4 M5.8 10 H8" fill="none" stroke="#6a6a6a" stroke-width="1" stroke-linecap="round" stroke-linejoin="round"/><path d="M9.4 10.4 L14 15 M14 10.4 L9.4 15" stroke="#6a6a6a" stroke-width="1" stroke-linecap="round"/></svg>
<div class="abs" style="left:91.25px;top:0;height:20px;line-height:20.4px;font-size:11.5px;letter-spacing:0.064px;color:#555;white-space:nowrap">Accessibility: Investigate</div>
<div class="abs" style="left:1243.5px;top:0;width:32.5px;height:21px;background:#b1b1b1"></div>
<svg class="abs" style="left:1253px;top:4px" width="13" height="13" viewBox="0 0 13 13"><rect x="0" y="0" width="12.8" height="12.8" fill="#e9e9e9"/><rect x="0.6" y="0.6" width="3.2" height="3.2" fill="#fff"/><rect x="0.6" y="4.8" width="3.2" height="3.2" fill="#fff"/><rect x="0.6" y="9.0" width="3.2" height="3.2" fill="#fff"/><rect x="4.8" y="0.6" width="3.2" height="3.2" fill="#fff"/><rect x="4.8" y="4.8" width="3.2" height="3.2" fill="#fff"/><rect x="4.8" y="9.0" width="3.2" height="3.2" fill="#fff"/><rect x="9.0" y="0.6" width="3.2" height="3.2" fill="#fff"/><rect x="9.0" y="4.8" width="3.2" height="3.2" fill="#fff"/><rect x="9.0" y="9.0" width="3.2" height="3.2" fill="#fff"/></svg>
<svg class="abs" style="left:1285.5px;top:4px" width="14" height="13" viewBox="0 0 14 13"><rect x=".6" y=".6" width="12.6" height="11.6" rx=".8" fill="#e9e9e9" stroke="#8b8b8b" stroke-width="1"/><rect x="3.2" y="3" width="7.4" height="6.8" fill="#dcdcdc" stroke="#8b8b8b" stroke-width=".9"/></svg>
<svg class="abs" style="left:1317.5px;top:4px" width="14" height="13" viewBox="0 0 14 13"><rect x=".6" y=".6" width="12.6" height="11.6" rx=".8" fill="#e9e9e9" stroke="#8b8b8b" stroke-width="1"/><path d="M.6 6.6 H13.2 M4.6 .6 V6.6 M8.4 .6 V6.6" stroke="#8b8b8b" stroke-width=".9" fill="none"/></svg>
<div class="abs" style="left:1348.5px;top:9.7px;width:7px;height:1.5px;background:#5f5f5f"></div>
<div class="abs" style="left:1362.5px;top:8.7px;width:90.7px;height:3.6px;border-radius:2px;background:#a9a9a9"></div>
<div class="abs" style="left:1405.8px;top:3.4px;width:14.2px;height:14.2px;border-radius:8px;background:#fff;box-shadow:0 0 1.5px rgba(0,0,0,.35),0 1px 1.5px rgba(0,0,0,.18)"></div>
<div class="abs" style="left:1460.2px;top:9.7px;width:7.4px;height:1.5px;background:#4a4a4a"></div><div class="abs" style="left:1463.15px;top:6.8px;width:1.5px;height:7.4px;background:#4a4a4a"></div>
<div class="abs" style="left:1484px;top:0;height:20px;line-height:20.4px;font-size:11.4px;letter-spacing:-0.252px;color:#666;white-space:nowrap">140%</div>
</div>
</body></html>
